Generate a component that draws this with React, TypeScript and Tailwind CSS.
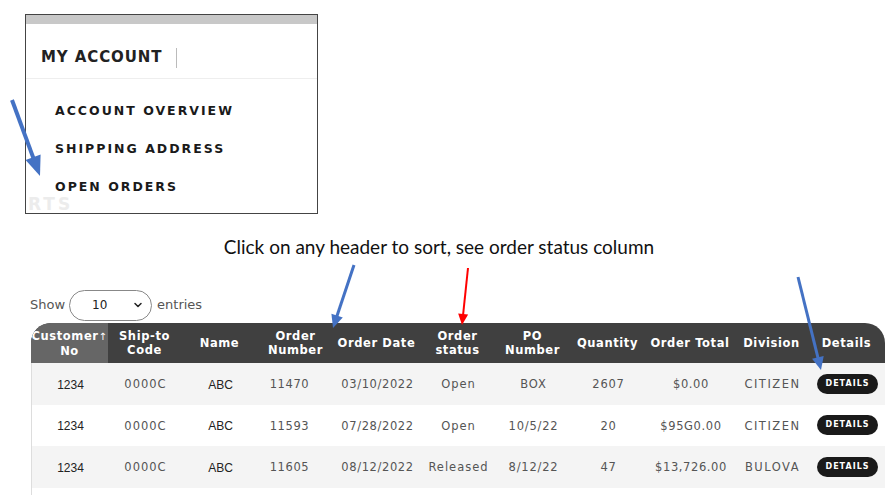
import { ChevronDown } from 'lucide-react';

const MONT = "font-['DejaVu_Sans',sans-serif]";

const COLS = 'grid grid-cols-[77px_73px_77px_75px_87px_75px_75px_75px_90px_73px_77px]';

const HEADERS = [
  ['Customer', 'No'],
  ['Ship-to', 'Code'],
  ['Name'],
  ['Order', 'Number'],
  ['Order Date'],
  ['Order', 'status'],
  ['PO', 'Number'],
  ['Quantity'],
  ['Order Total'],
  ['Division'],
  ['Details'],
];

const ROWS = [
  { cust: '1234', ship: '0000C', name: 'ABC', num: '11470', date: '03/10/2022', status: 'Open', po: 'BOX', qty: '2607', total: '$0.00', div: 'CITIZEN' },
  { cust: '1234', ship: '0000C', name: 'ABC', num: '11593', date: '07/28/2022', status: 'Open', po: '10/5/22', qty: '20', total: '$95G0.00', div: 'CITIZEN' },
  { cust: '1234', ship: '0000C', name: 'ABC', num: '11605', date: '08/12/2022', status: 'Released', po: '8/12/22', qty: '47', total: '$13,726.00', div: 'BULOVA' },
];

type Pt = [number, number];

function Arrow({ from, to, color, width, head, half }: { from: Pt; to: Pt; color: string; width: number; head: number; half: number }) {
  const dx = to[0] - from[0];
  const dy = to[1] - from[1];
  const len = Math.hypot(dx, dy);
  const ux = dx / len;
  const uy = dy / len;
  const bx = to[0] - ux * head;
  const by = to[1] - uy * head;
  const p1 = `${bx - uy * half},${by + ux * half}`;
  const p2 = `${bx + uy * half},${by - ux * half}`;
  return (
    <g>
      <line x1={from[0]} y1={from[1]} x2={bx + ux * 2} y2={by + uy * 2} stroke={color} strokeWidth={width} />
      <polygon points={`${to[0]},${to[1]} ${p1} ${p2}`} fill={color} />
    </g>
  );
}

function AccountMenu() {
  return (
    <div className="ml-[25px] mt-[14px] h-[200px] w-[293px] overflow-hidden border border-[#444] bg-white">
      <div className="h-[9px] bg-[#c8c8c8]" />
      <div className="flex h-[55px] items-center border-b border-[#eeeeee] pl-[15px] pt-[13px]">
        <span className={`${MONT} text-[15px] font-bold tracking-[0.9px] text-[#222]`}>MY ACCOUNT</span>
        <span className="ml-[14px] h-[20px] w-px bg-[#bbb]" />
      </div>
      <div className={`${MONT} flex flex-col gap-[22px] pl-[29px] pt-[24px] text-[12.5px] font-bold tracking-[2px] text-[#1a1a1a]`}>
        <span className="leading-[16px]">ACCOUNT OVERVIEW</span>
        <span className="leading-[16px]">SHIPPING ADDRESS</span>
        <span className="leading-[16px]">OPEN ORDERS</span>
      </div>
      <div className={`${MONT} ml-[2px] mt-[1px] text-[17px] font-bold tracking-[3px] text-[#ececec] leading-[16px]`}>RTS</div>
    </div>
  );
}

function DetailsButton() {
  return (
    <span className={`${MONT} inline-flex h-[20px] w-[61px] items-center justify-center rounded-full bg-[#1a1a1a] text-[8px] font-bold tracking-[1px] text-white`}>
      DETAILS
    </span>
  );
}

function OrdersTable() {
  return (
    <div className="ml-[31px] w-[854px]">
      <div className={`${COLS} h-[40px] overflow-hidden rounded-t-[20px] bg-[#404040] text-white`}>
        {HEADERS.map((h, i) => (
          <div
            key={i}
            className={`${MONT} flex flex-col items-center justify-center text-[11.5px] font-bold leading-[14px] tracking-[0.6px] ${i === 0 ? 'bg-[#666666]' : ''}`}
          >
            {h.map((line, j) => (
              <span key={j}>
                {line}
                {i === 0 && j === 0 ? <span className="text-[10px] font-normal">↑</span> : null}
              </span>
            ))}
          </div>
        ))}
      </div>
      <div className="border-l border-[#dddddd]">
        {ROWS.map((r, i) => (
          <div key={i} className={`${COLS} h-[41.5px] items-center pt-[2px] text-center ${i % 2 === 0 ? 'bg-[#f4f4f4]' : 'bg-white'}`}>
            <span className="font-['Liberation_Sans',sans-serif] text-[12px] text-[#222]">{r.cust}</span>
            <span className={`${MONT} text-[11.5px] tracking-[1px] text-[#555]`}>{r.ship}</span>
            <span className="font-['Liberation_Sans',sans-serif] text-[12px] text-[#222]">{r.name}</span>
            <span className={`${MONT} pr-[14px] text-[11.5px] tracking-[0.6px] text-[#555]`}>{r.num}</span>
            <span className={`${MONT} text-[11.5px] tracking-[0.6px] text-[#555]`}>{r.date}</span>
            <span className={`${MONT} text-[11.5px] tracking-[1px] text-[#555]`}>{r.status}</span>
            <span className={`${MONT} text-[11.5px] tracking-[0.8px] text-[#555]`}>{r.po}</span>
            <span className={`${MONT} text-[11.5px] tracking-[0.8px] text-[#555]`}>{r.qty}</span>
            <span className={`${MONT} text-[11.5px] tracking-[0.6px] text-[#555]`}>{r.total}</span>
            <span className={`${MONT} text-[11.5px] tracking-[1.5px] text-[#555]`}>{r.div}</span>
            <span className="-mt-[2px] flex justify-center">
              <DetailsButton />
            </span>
          </div>
        ))}
        <div className="h-[8px] bg-white" />
      </div>
    </div>
  );
}

export default function App() {
  return (
    <div className="relative h-[495px] w-[889px] overflow-hidden bg-white">
      <AccountMenu />

      <p className="mt-[21px] pr-[11px] text-center font-['Lato',sans-serif] text-[19px] leading-[24px] text-[#111]">
        Click on any header to sort, see order status column
      </p>

      <div className={`${MONT} ml-[30px] mt-[30px] flex h-[32px] items-center text-[13px] text-[#555]`}>
        <span>Show</span>
        <div className="ml-[4px] flex h-[31px] w-[83px] items-center rounded-[16px] border border-[#888] pl-[22px] pr-[7px] text-[#222]">
          <span className="flex-1 text-[12px]">10</span>
          <ChevronDown size={12} strokeWidth={3} />
        </div>
        <span className="ml-[5px]">entries</span>
      </div>

      <div className="mt-[2px]">
        <OrdersTable />
      </div>

      <svg className="pointer-events-none absolute left-0 top-0" width={889} height={495}>
        <Arrow from={[12, 100]} to={[40, 176]} color="#4472c4" width={4} head={20} half={8} />
        <Arrow from={[354, 265]} to={[333, 328]} color="#4472c4" width={3} head={13} half={6} />
        <Arrow from={[468, 268]} to={[462, 325]} color="#ff0000" width={2} head={11} half={5} />
        <Arrow from={[798, 277]} to={[821, 370]} color="#4472c4" width={3} head={13} half={6} />
      </svg>
    </div>
  );
}
